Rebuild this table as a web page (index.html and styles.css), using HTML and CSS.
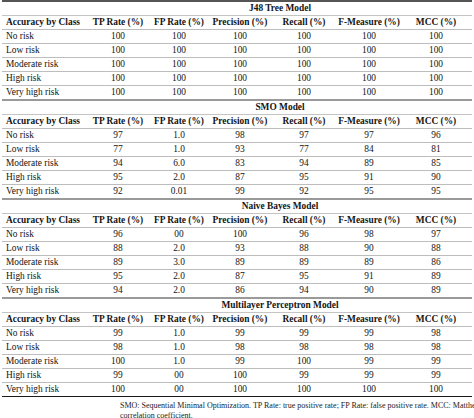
FILE: index.html
```html
<!DOCTYPE html>
<html>
<head>
<meta charset="utf-8">
<link rel="stylesheet" href="styles.css">
</head>
<body>
<div class="wrap">
<table class="tbl">
  <colgroup>
    <col class="c1"><col class="c2"><col class="c3"><col class="c4"><col class="c5"><col class="c6"><col class="c7">
  </colgroup>
  <tbody>
    <tr class="title first"><td></td><td colspan="6">J48 Tree Model</td></tr>
    <tr class="head"><td>Accuracy by Class</td><td>TP Rate (%)</td><td>FP Rate (%)</td><td>Precision (%)</td><td>Recall (%)</td><td>F-Measure (%)</td><td>MCC (%)</td></tr>
    <tr><td>No risk</td><td>100</td><td>100</td><td>100</td><td>100</td><td>100</td><td>100</td></tr>
    <tr><td>Low risk</td><td>100</td><td>100</td><td>100</td><td>100</td><td>100</td><td>100</td></tr>
    <tr><td>Moderate risk</td><td>100</td><td>100</td><td>100</td><td>100</td><td>100</td><td>100</td></tr>
    <tr><td>High risk</td><td>100</td><td>100</td><td>100</td><td>100</td><td>100</td><td>100</td></tr>
    <tr><td>Very high risk</td><td>100</td><td>100</td><td>100</td><td>100</td><td>100</td><td>100</td></tr>

    <tr class="title"><td></td><td colspan="6">SMO Model</td></tr>
    <tr class="head"><td>Accuracy by Class</td><td>TP Rate (%)</td><td>FP Rate (%)</td><td>Precision (%)</td><td>Recall (%)</td><td>F-Measure (%)</td><td>MCC (%)</td></tr>
    <tr><td>No risk</td><td>97</td><td>1.0</td><td>98</td><td>97</td><td>97</td><td>96</td></tr>
    <tr><td>Low risk</td><td>77</td><td>1.0</td><td>93</td><td>77</td><td>84</td><td>81</td></tr>
    <tr><td>Moderate risk</td><td>94</td><td>6.0</td><td>83</td><td>94</td><td>89</td><td>85</td></tr>
    <tr><td>High risk</td><td>95</td><td>2.0</td><td>87</td><td>95</td><td>91</td><td>90</td></tr>
    <tr><td>Very high risk</td><td>92</td><td>0.01</td><td>99</td><td>92</td><td>95</td><td>95</td></tr>

    <tr class="title"><td></td><td colspan="6">Naive Bayes Model</td></tr>
    <tr class="head"><td>Accuracy by Class</td><td>TP Rate (%)</td><td>FP Rate (%)</td><td>Precision (%)</td><td>Recall (%)</td><td>F-Measure (%)</td><td>MCC (%)</td></tr>
    <tr><td>No risk</td><td>96</td><td>00</td><td>100</td><td>96</td><td>98</td><td>97</td></tr>
    <tr><td>Low risk</td><td>88</td><td>2.0</td><td>93</td><td>88</td><td>90</td><td>88</td></tr>
    <tr><td>Moderate risk</td><td>89</td><td>3.0</td><td>89</td><td>89</td><td>89</td><td>86</td></tr>
    <tr><td>High risk</td><td>95</td><td>2.0</td><td>87</td><td>95</td><td>91</td><td>89</td></tr>
    <tr><td>Very high risk</td><td>94</td><td>2.0</td><td>86</td><td>94</td><td>90</td><td>89</td></tr>

    <tr class="title"><td></td><td colspan="6">Multilayer Perceptron Model</td></tr>
    <tr class="head"><td>Accuracy by Class</td><td>TP Rate (%)</td><td>FP Rate (%)</td><td>Precision (%)</td><td>Recall (%)</td><td>F-Measure (%)</td><td>MCC (%)</td></tr>
    <tr><td>No risk</td><td>99</td><td>1.0</td><td>99</td><td>99</td><td>99</td><td>98</td></tr>
    <tr><td>Low risk</td><td>98</td><td>1.0</td><td>98</td><td>98</td><td>98</td><td>98</td></tr>
    <tr><td>Moderate risk</td><td>100</td><td>1.0</td><td>99</td><td>100</td><td>99</td><td>99</td></tr>
    <tr><td>High risk</td><td>99</td><td>00</td><td>100</td><td>99</td><td>99</td><td>99</td></tr>
    <tr class="last"><td>Very high risk</td><td>100</td><td>00</td><td>100</td><td>100</td><td>100</td><td>100</td></tr>
  </tbody>
</table>
<p class="note">SMO: Sequential Minimal Optimization. TP Rate: true positive rate; FP Rate: false positive rate. MCC: Matthews<br>correlation coefficient.</p>
</div>
</body>
</html>
```

FILE: styles.css
```css
html, body {
  margin: 0;
  padding: 0;
  background: #fff;
  overflow: hidden;
}
body {
  width: 474px;
  height: 418px;
  font-family: "Liberation Serif", "Times New Roman", serif;
  color: #141414;
}
.wrap {
  padding: 0 2px 0 2px;
}
.tbl {
  width: 470px;
  border-collapse: collapse;
  table-layout: fixed;
  font-size: 9.4px;
}
.c1 { width: 86px; }
.c2 { width: 60px; }
.c3 { width: 62px; }
.c4 { width: 60px; }
.c5 { width: 68px; }
.c6 { width: 62px; }
.c7 { width: 72px; }
.tbl td {
  height: 13px;
  padding: 0;
  text-align: center;
  border-bottom: 1px solid #bdbdbd;
  white-space: nowrap;
  line-height: 13px;
}
.tbl td:first-child {
  text-align: left;
  padding-left: 4px;
}
.title td {
  font-weight: bold;
  border-top: 2px solid #9a9a9a;
  border-bottom: 1px solid #c4c4c4;
}
.title.first td {
  border-top: 2px solid #555;
}
.head td {
  font-weight: bold;
}
.last td {
  border-bottom: 1px solid #1a1a1a;
}
.note {
  margin: 4px 0 0 118px;
  font-size: 8px;
  line-height: 10px;
  white-space: nowrap;
  color: #222;
}
```
